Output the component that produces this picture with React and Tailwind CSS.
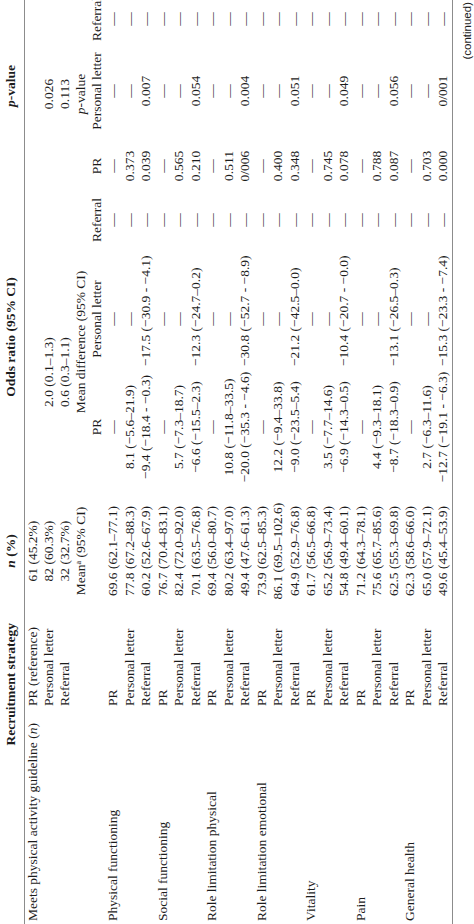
import React from "react";

const G = "grid grid-cols-[215px_95px_126px_122px_94px_28px_48px_60px_90px_54px] whitespace-nowrap";

const groups = [
  ["Physical functioning", [
    ["PR", "69.6 (62.1–77.1)", "—", "—", "—", "—", "—", "—"],
    ["Personal letter", "77.8 (67.2–88.3)", "8.1 (−5.6–21.9)", "—", "—", "0.373", "—", "—"],
    ["Referral", "60.2 (52.6–67.9)", "−9.4 (−18.4 - −0.3)", "−17.5 (−30.9 - −4.1)", "—", "0.039", "0.007", "—"],
  ]],
  ["Social functioning", [
    ["PR", "76.7 (70.4–83.1)", "—", "—", "—", "—", "—", "—"],
    ["Personal letter", "82.4 (72.0–92.0)", "5.7 (−7.3–18.7)", "—", "—", "0.565", "—", "—"],
    ["Referral", "70.1 (63.5–76.8)", "−6.6 (−15.5–2.3)", "−12.3 (−24.7–0.2)", "—", "0.210", "0.054", "—"],
  ]],
  ["Role limitation physical", [
    ["PR", "69.4 (56.0–80.7)", "—", "—", "—", "—", "—", "—"],
    ["Personal letter", "80.2 (63.4–97.0)", "10.8 (−11.8–33.5)", "—", "—", "0.511", "—", "—"],
    ["Referral", "49.4 (47.6–61.3)", "−20.0 (−35.3 - −4.6)", "−30.8 (−52.7 - −8.9)", "—", "0/006", "0.004", "—"],
  ]],
  ["Role limitation emotional", [
    ["PR", "73.9 (62.5–85.3)", "—", "—", "—", "—", "—", "—"],
    ["Personal letter", "86.1 (69.5–102.6)", "12.2 (−9.4–33.8)", "—", "—", "0.400", "—", "—"],
    ["Referral", "64.9 (52.9–76.8)", "−9.0 (−23.5–5.4)", "−21.2 (−42.5–0.0)", "—", "0.348", "0.051", "—"],
  ]],
  ["Vitality", [
    ["PR", "61.7 (56.5–66.8)", "—", "—", "—", "—", "—", "—"],
    ["Personal letter", "65.2 (56.9–73.4)", "3.5 (−7.7–14.6)", "—", "—", "0.745", "—", "—"],
    ["Referral", "54.8 (49.4–60.1)", "−6.9 (−14.3–0.5)", "−10.4 (−20.7 - −0.0)", "—", "0.078", "0.049", "—"],
  ]],
  ["Pain", [
    ["PR", "71.2 (64.3–78.1)", "—", "—", "—", "—", "—", "—"],
    ["Personal letter", "75.6 (65.7–85.6)", "4.4 (−9.3–18.1)", "—", "—", "0.788", "—", "—"],
    ["Referral", "62.5 (55.3–69.8)", "−8.7 (−18.3–0.9)", "−13.1 (−26.5–0.3)", "—", "0.087", "0.056", "—"],
  ]],
  ["General health", [
    ["PR", "62.3 (58.6–66.0)", "—", "—", "—", "—", "—", "—"],
    ["Personal letter", "65.0 (57.9–72.1)", "2.7 (−6.3–11.6)", "—", "—", "0.703", "—", "—"],
    ["Referral", "49.6 (45.4–53.9)", "−12.7 (−19.1 - −6.3)", "−15.3 (−23.3 - −7.4)", "—", "0.000", "0/001", "—"],
  ]],
];

function DataRow({ label, r }) {
  return (
    <div className={`${G} h-[16.5px] leading-[16.5px]`}>
      <div className="pl-[3px]">{label}</div>
      <div className="pl-[3px]">{r[0]}</div>
      <div className="text-center">{r[1]}</div>
      <div className="text-center">{r[2]}</div>
      <div className="text-center">{r[3]}</div>
      <div></div>
      <div className="text-center">{r[4]}</div>
      <div className="text-center">{r[5]}</div>
      <div className="text-center">{r[6]}</div>
      <div className="text-center">{r[7]}</div>
    </div>
  );
}

export default function App() {
  return (
    <div className="w-[474px] h-[924px] overflow-hidden bg-white">
      <div className="w-[924px] h-[474px] origin-top-left -rotate-90 translate-y-[924px] font-['Liberation_Serif',serif] text-[13.5px] text-[#1c1c1c]">
        {/* header */}
        <div className={`${G} h-[25px] pt-[3px] leading-[16px] border-b border-[#8c8c8c] font-bold`}>
          <div className="col-span-2 text-right pr-[9px]">Recruitment strategy</div>
          <div className="text-center"><i>n</i> (%)</div>
          <div className="col-span-4 text-center pl-[10px]">Odds ratio (95% CI)</div>
          <div className="col-span-3 text-center pl-[16px]"><i>p</i>-value</div>
        </div>
        <div className={`${G} h-[16px] leading-[16px]`}>
          <div className="pl-[3px]">Meets physical activity guideline (<i>n</i>)</div>
          <div className="pl-[3px]">PR (reference)</div>
          <div className="text-center">61 (45.2%)</div>
          <div className="col-span-4"></div>
          <div className="col-span-3"></div>
        </div>
        <div className={`${G} h-[16px] leading-[16px]`}>
          <div></div>
          <div className="pl-[3px]">Personal letter</div>
          <div className="text-center">82 (60.3%)</div>
          <div className="col-span-4 text-center pr-[60px]">2.0 (0.1–1.3)</div>
          <div className="col-span-3 text-center">0.026</div>
        </div>
        <div className={`${G} h-[16px] leading-[16px]`}>
          <div></div>
          <div className="pl-[3px]">Referral</div>
          <div className="text-center">32 (32.7%)</div>
          <div className="col-span-4 text-center pr-[60px]">0.6 (0.3–1.1)</div>
          <div className="col-span-3 text-center">0.113</div>
        </div>
        <div className={`${G} h-[16px] leading-[16px]`}>
          <div></div>
          <div></div>
          <div className="text-center">Mean<sup className="text-[8px]">a</sup> (95% CI)</div>
          <div className="col-span-4 text-center">Mean difference (95% CI)</div>
          <div className="col-span-3 text-center"><i>p</i>-value</div>
        </div>
        <div className={`${G} h-[16px] leading-[16px]`}>
          <div></div>
          <div></div>
          <div></div>
          <div className="text-center">PR</div>
          <div className="text-center">Personal letter</div>
          <div></div>
          <div className="text-center">Referral</div>
          <div className="text-center">PR</div>
          <div className="text-center">Personal letter</div>
          <div className="text-center">Referral</div>
        </div>
        <div className="border-b border-[#8c8c8c]">
          {groups.map(([label, rows]) =>
            rows.map((r, i) => (
              <DataRow key={label + i} label={i === 0 ? label : ""} r={r} />
            ))
          )}
        </div>
        <div className="pt-[6px] pr-[2px] text-right font-['Liberation_Sans',sans-serif] text-[11.5px] leading-[16px]">(continued)</div>
      </div>
    </div>
  );
}
